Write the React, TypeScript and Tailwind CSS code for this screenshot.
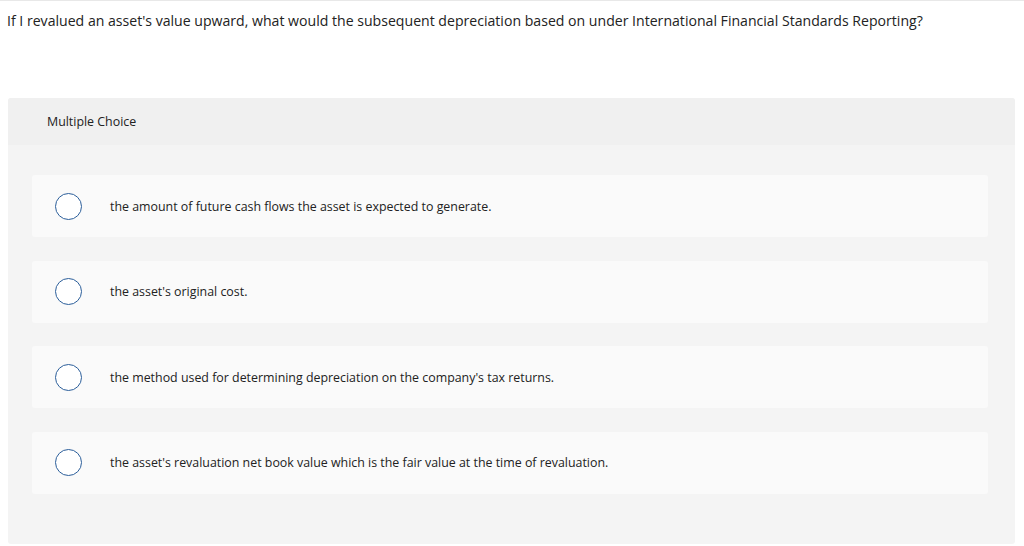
import React from "react";

const options = [
  "the amount of future cash flows the asset is expected to generate.",
  "the asset's original cost.",
  "the method used for determining depreciation on the company's tax returns.",
  "the asset's revaluation net book value which is the fair value at the time of revaluation.",
];

export default function App() {
  return (
    <div
      className="w-[1024px] h-[546px] bg-white text-[#222] overflow-hidden border-t border-[#e8e8e8]"
      style={{ fontFamily: '"Open Sans", sans-serif' }}
    >
      <p className="pl-[7px] pt-[10px] text-[14.1px] leading-[20px]">
        If I revalued an asset's value upward, what would the subsequent depreciation based on under International Financial Standards Reporting?
      </p>

      <section className="mt-[67px] ml-[8px] w-[1007px] h-[446px] rounded-[3px] bg-[#f4f4f4]">
        <div className="h-[47px] flex items-center pl-[39px] pt-[1px] bg-[#f0f0f0] rounded-t-[3px] text-[12.4px]">
          Multiple Choice
        </div>

        <div className="flex flex-col gap-[23.5px] pt-[30px] pl-[24px] pr-[27px]">
          {options.map((text) => (
            <label
              key={text}
              className="h-[62px] rounded-[3px] bg-[#fafafa] flex items-center text-[12.4px]"
            >
              <span className="ml-[23px] w-[27px] h-[27px] rounded-full border border-[#2b5e9a] bg-white shrink-0" />
              <span className="ml-[28px] pt-[2px]">{text}</span>
            </label>
          ))}
        </div>
      </section>
    </div>
  );
}
